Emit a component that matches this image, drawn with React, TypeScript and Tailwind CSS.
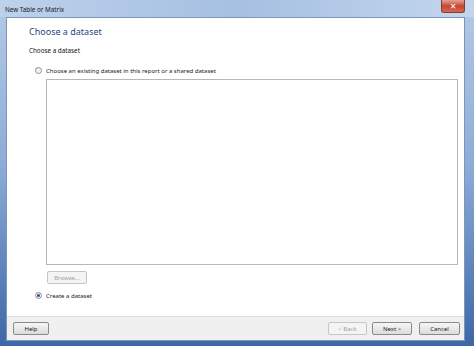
const font = { fontFamily: '"Noto Sans", "DejaVu Sans", sans-serif' };

const Radio = ({ checked }: { checked?: boolean }) => (
  <span className="w-[7px] h-[7px] rounded-full border border-[#8e8f8f] bg-gradient-to-br from-[#e6e6e6] to-white flex items-center justify-center">
    {checked && <span className="w-[3px] h-[3px] rounded-full bg-[#1f4f95]" />}
  </span>
);

const Btn = ({ label, disabled, className }: { label: string; disabled?: boolean; className?: string }) => (
  <button
    className={`h-[13px] rounded-[2px] border text-[6px] leading-none flex items-center justify-center ${
      disabled
        ? 'border-[#c6c6c6] bg-[#f4f4f4] text-[#a0a0a0]'
        : 'border-[#8a8a8a] bg-gradient-to-b from-[#f6f6f6] to-[#dcdcdc] text-[#222]'
    } ${className ?? ''}`}
  >
    {label}
  </button>
);

export default function App() {
  return (
    <div
      className="w-[474px] h-[346px] flex flex-col bg-gradient-to-b from-[#b5cbe6] via-[#8aaad6] to-[#3d67a6]"
      style={font}
    >
      <div className="h-[17px] flex items-start justify-between pl-[5px] pr-[9px] bg-gradient-to-r from-[#bcd2ec] via-[#a6c0e2] to-[#c3d6ee]">
        <span className="text-[6.3px] text-[#1a1a1a] mt-[5px]">New Table or Matrix</span>
        <div className="w-[24px] h-[13px] rounded-b-[3px] border border-t-0 border-[#8a3a2e] bg-gradient-to-b from-[#e0a296] via-[#c7442f] to-[#d36a50] flex items-center justify-center text-white text-[8px] font-bold leading-none">
          ✕
        </div>
      </div>
      <div className="flex-1 flex pl-[6px] pr-[9px]">
        <div className="flex-1 flex flex-col bg-white border border-[#7d95b8]">
          <div className="flex-1 flex flex-col pl-[22px] pr-[6px]">
            <div className="text-[9px] text-[#2a3f86] mt-[9px] leading-none">Choose a dataset</div>
            <div className="text-[6.3px] text-[#111] mt-[12px] leading-none">Choose a dataset</div>
            <div className="flex items-center gap-[4px] mt-[13px] pl-[6px]">
              <Radio />
              <span className="text-[6px] text-[#222] leading-none">
                Choose an existing dataset in this report or a shared dataset
              </span>
            </div>
            <div className="ml-[17px] mt-[5px] h-[186px] border border-[#b7b7b7] bg-white" />
            <Btn label="Browse..." disabled className="ml-[18px] mt-[6px] w-[40px]" />
            <div className="flex items-center gap-[4px] mt-[8px] pl-[6px]">
              <Radio checked />
              <span className="text-[6px] text-[#222] leading-none">Create a dataset</span>
            </div>
          </div>
          <div className="h-[24px] border-t border-[#dcdcdc] bg-[#f0f0f0] flex items-center pl-[6px] pr-[4px]">
            <Btn label="Help" className="w-[36px]" />
            <div className="flex-1" />
            <Btn label="< Back" disabled className="w-[39px]" />
            <Btn label="Next >" className="w-[40px] ml-[5px]" />
            <Btn label="Cancel" className="w-[41px] ml-[7px]" />
          </div>
        </div>
      </div>
      <div className="h-[5px]" />
    </div>
  );
}
